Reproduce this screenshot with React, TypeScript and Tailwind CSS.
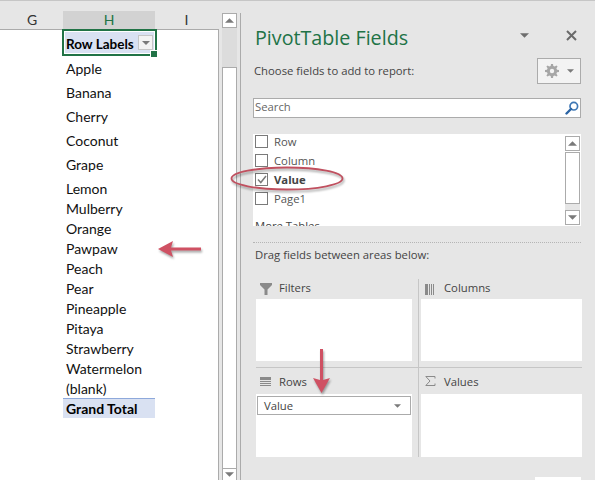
import React from 'react';

const SHEET_FONT = { tall: ['Apple', 'Banana', 'Cherry', 'Coconut', 'Grape'], short: ['Mulberry', 'Orange', 'Pawpaw', 'Peach', 'Pear', 'Pineapple', 'Pitaya', 'Strawberry', 'Watermelon'] };
const FIELDS = [
  { name: 'Row', checked: false },
  { name: 'Column', checked: false },
  { name: 'Value', checked: true },
  { name: 'Page1', checked: false },
];

const Tri: React.FC<{ up?: boolean; w?: number; color?: string }> = ({ up, w = 9, color = '#7a7a7a' }) => (
  <svg width={w} height={Math.ceil(w / 2)} viewBox="0 0 10 5" className="block">
    <path d={up ? 'M5 0L10 5H0Z' : 'M0 0H10L5 5Z'} fill={color} />
  </svg>
);

const ScrollBtn: React.FC<{ up?: boolean; h?: number }> = ({ up, h = 15 }) => (
  <div className="w-[15px] shrink-0 bg-white border border-[#ababab] flex items-center justify-center" style={{ height: h }}>
    <Tri up={up} />
  </div>
);

const FilterIcon = () => (
  <svg width="12" height="12" viewBox="0 0 12 12"><path d="M0 0H12V2L7.5 6.5V12H4.5V6.5L0 2Z" fill="#8a8a8a" /></svg>
);
const ColumnsIcon = () => (
  <svg width="10" height="11" viewBox="0 0 10 11"><path d="M0 0H3V11H0ZM4 0H5V11H4ZM6 0H7V11H6ZM8 0H9V11H8Z" fill="#8a8a8a" /></svg>
);
const RowsIcon = () => (
  <svg width="11" height="9" viewBox="0 0 11 9"><path d="M0 0H11V3H0ZM0 4H11V5H0ZM0 6H11V7H0ZM0 8H11V9H0Z" fill="#8a8a8a" /></svg>
);
const SigmaIcon = () => (
  <svg width="11" height="10" viewBox="0 0 11 10"><path d="M10 2.5V.5H.8L5 5 .8 9.5H10V7.5" fill="none" stroke="#8a8a8a" strokeWidth="1" /></svg>
);
const GearIcon = () => (
  <svg width="14" height="14" viewBox="0 0 14 14">
    <path d="M6 0H8L8.3 2 9.8 2.6 11.4 1.4 12.6 2.6 11.4 4.2 12 5.7 14 6V8L12 8.3 11.4 9.8 12.6 11.4 11.4 12.6 9.8 11.4 8.3 12 8 14H6L5.7 12 4.2 11.4 2.6 12.6 1.4 11.4 2.6 9.8 2 8.3 0 8V6L2 5.7 2.6 4.2 1.4 2.6 2.6 1.4 4.2 2.6 5.7 2Z" fill="#a6a6a6" />
    <circle cx="7" cy="7" r="2.2" fill="#f3f3f3" />
  </svg>
);
const SearchIcon = () => (
  <svg width="14" height="14" viewBox="0 0 14 14">
    <circle cx="8.8" cy="5.2" r="3.8" fill="none" stroke="#3f78b5" strokeWidth="1.7" />
    <path d="M6 8L1.5 12.5" stroke="#2b64a4" strokeWidth="2.4" strokeLinecap="round" />
  </svg>
);

const AreaLabel: React.FC<{ icon: React.ReactNode; label: string; h: number; textClass: string }> = ({ icon, label, h, textClass }) => (
  <div className="flex items-center" style={{ height: h }}>
    <div className="w-[23px] pl-[4px] flex justify-start">{icon}</div>
    <span className={`text-[11.3px] text-[#444] ${textClass}`}>{label}</span>
  </div>
);

const App: React.FC = () => {
  return (
    <div className="relative w-[595px] h-[480px] overflow-hidden bg-[#e6e6e6] border-t border-[#c6c6c6] text-[#444]" style={{ fontFamily: '"Open Sans", sans-serif' }}>
      <div className="flex h-full pt-[10px]">
        {/* sheet */}
        <div className="w-[219px] shrink-0 flex flex-col" style={{ fontFamily: 'Lato, sans-serif' }}>
          <div className="flex h-[18px] text-[14px] text-[#333] shrink-0">
            <div className="w-[63px] text-center pl-[1px] leading-[18px]">G</div>
            <div className="w-[92px] text-center bg-[#d2d2d2] text-[#217346] leading-[18px]">H</div>
            <div className="w-[63px] text-center leading-[18px]">I</div>
          </div>
          <div className="flex-1 bg-white border-t border-r border-[#ababab] text-[14px] text-[#111]">
            <div className="relative ml-[62px] -mt-[1px] w-[95px] h-[27px] border-2 border-[#217346] p-[1px]">
              <div className="h-full bg-[#d9e1f2] flex items-center justify-between pl-[1px] pr-[1px] font-bold text-[13.5px] text-black">
                <span className="pt-[4px]">Row Labels</span>
                <div className="w-[15px] h-[15px] bg-[#f3f3f3] border border-[#c6c6c6] flex items-center justify-center"><Tri w={8} /></div>
              </div>
              <div className="absolute -right-[2px] -bottom-[3px] w-[6px] h-[6px] bg-[#217346] border border-white box-content -mr-[1px] -mb-[1px]" />
            </div>
            <div className="ml-[63px] w-[92px]">
              {SHEET_FONT.tall.map(f => (
                <div key={f} className="h-[24px] pl-[3px] flex items-center">{f}</div>
              ))}
              <div className="h-[22px] pl-[3px] flex items-center pt-[2px]">Lemon</div>
              {SHEET_FONT.short.map(f => (
                <div key={f} className="h-[20px] pl-[3px] flex items-center">{f}</div>
              ))}
              <div className="h-[20px] pl-[3px] flex items-center">(blank)</div>
              <div className="h-[20px] pl-[3px] flex items-center font-bold text-[14px] text-black bg-[#d9e1f2] border-t border-[#8ea9db]">Grand Total</div>
            </div>
          </div>
        </div>

        {/* sheet scrollbar */}
        <div className="ml-[3px] w-[15px] shrink-0 flex flex-col pt-[2px] -mb-[1px]">
          <ScrollBtn up h={15} />
          <div className="h-[39px] bg-[#dcdcdc] shrink-0" />
          <div className="flex-1 bg-white border border-[#ababab] border-b-0" />
          <ScrollBtn h={13} />
        </div>

        {/* field list panel */}
        <div className="ml-[3px] flex-1 border-l border-[#ababab] mt-[2px] pl-[12px] min-w-0">
          <div className="flex items-center h-[50px] pt-[1px] pb-[4px]">
            <span className="text-[#217346] text-[19.7px] leading-none mt-[3px] ml-[2px]">PivotTable Fields</span>
            <div className="ml-auto mr-[37px] -mt-[3px]"><Tri w={9} color="#6e6e6e" /></div>
            <svg width="11" height="11" viewBox="0 0 11 11" className="mr-[4px] -mt-[3px]"><path d="M1 1L10 10M10 1L1 10" stroke="#6a6a6a" strokeWidth="2" /></svg>
            <div className="w-[14px]" />
          </div>
          <div className="flex items-center justify-between w-[328px] h-[26px] -mt-[5px]">
            <span className="text-[11.3px] ml-[1px]">Choose fields to add to report:</span>
            <div className="w-[44px] h-[26px] bg-[#f3f3f3] border border-[#ababab] flex items-center justify-center gap-[8px]">
              <GearIcon /><Tri w={7} />
            </div>
          </div>
          <div className="w-[328px] h-[20px] mt-[14px] bg-white border border-[#ababab] flex items-center justify-between pl-[1px] pr-[1px]">
            <span className="text-[11.3px] text-[#666] -mt-[2px]">Search</span>
            <SearchIcon />
          </div>

          <div className="w-[328px] h-[92px] mt-[16px] bg-white overflow-hidden flex justify-between pr-[1px]">
            <div className="pl-[2px] min-w-0 -mt-[2px]">
              {FIELDS.map(f => (
                <div key={f.name} className="flex items-center h-[19px]">
                  <div className="w-[13px] h-[13px] bg-white border border-[#7a7a7a] flex items-center justify-center">
                    {f.checked && (
                      <svg width="10" height="9" viewBox="0 0 10 9"><path d="M1 4.5L3.8 7.5L9 1" fill="none" stroke="#7a7a7a" strokeWidth="1.5" /></svg>
                    )}
                  </div>
                  <span className={`ml-[6px] pt-[2px] text-[11.3px] ${f.checked ? 'font-bold text-[#444]' : 'text-[#555]'}`}>{f.name}</span>
                </div>
              ))}
              <div className="mt-[10px] text-[11.3px] leading-[16px]">More Tables</div>
            </div>
            <div className="w-[15px] flex flex-col pt-[2px]">
              <ScrollBtn up h={15} />
              <div className="h-[52px] mt-[1px] bg-white border border-[#ababab] shrink-0" />
              <div className="h-[6px] bg-[#e6e6e6]" />
              <ScrollBtn h={15} />
            </div>
          </div>

          <div className="w-[328px] mt-[16px] border-t border-dotted border-[#b5b5b5]" />
          <div className="h-[24px] flex items-center pl-[2px] text-[11.3px]">Drag fields between areas below:</div>

          <div className="ml-[3px] w-[326px] mt-[12px] grid grid-cols-[163px_1fr]">
            <div className="border-r border-b border-[#c6c6c6] pb-[6px] pr-[6px]">
              <AreaLabel icon={<FilterIcon />} label="Filters" h={20} textClass="-mt-[2px]" />
              <div className="h-[62px] bg-white" />
            </div>
            <div className="border-b border-[#c6c6c6] pl-[2px] pb-[6px]">
              <AreaLabel icon={<ColumnsIcon />} label="Columns" h={20} textClass="-mt-[2px]" />
              <div className="h-[62px] bg-white" />
            </div>
            <div className="border-r border-[#c6c6c6] pr-[6px]">
              <AreaLabel icon={<RowsIcon />} label="Rows" h={26} textClass="pt-[2px]" />
              <div className="h-[63px] bg-white pt-[2px] px-[1px]">
                <div className="h-[19px] border border-[#ababab] bg-white flex items-center justify-between pl-[6px] pr-[9px] text-[11.3px]">
                  <span className="pt-[1px]">Value</span><Tri w={7} />
                </div>
              </div>
            </div>
            <div className="pl-[2px]">
              <AreaLabel icon={<SigmaIcon />} label="Values" h={26} textClass="pt-[2px]" />
              <div className="h-[63px] bg-white" />
            </div>
          </div>
          <div className="w-[326px] ml-[3px] flex justify-end mt-[20px] pr-[1px]">
            <div className="w-[46px] h-[8px] bg-white" />
          </div>
        </div>
      </div>

      {/* red callouts drawn over the screenshot */}
      <svg width="595" height="480" viewBox="0 0 595 480" className="absolute left-0 -top-[1px] pointer-events-none drop-shadow-[1px_2px_1px_rgba(0,0,0,0.35)]">
        <ellipse cx="287" cy="178.5" rx="55.5" ry="11" fill="none" stroke="#c0505f" strokeWidth="1.8" />
        <path d="M201 247.5V250.5H171L173 257L158 249L173 241L171 247.5Z" fill="#cf5163" />
        <path d="M320 349H323V380L330 378L321.5 393L313 378L320 380Z" fill="#cf5163" />
      </svg>
    </div>
  );
};

export default App;
